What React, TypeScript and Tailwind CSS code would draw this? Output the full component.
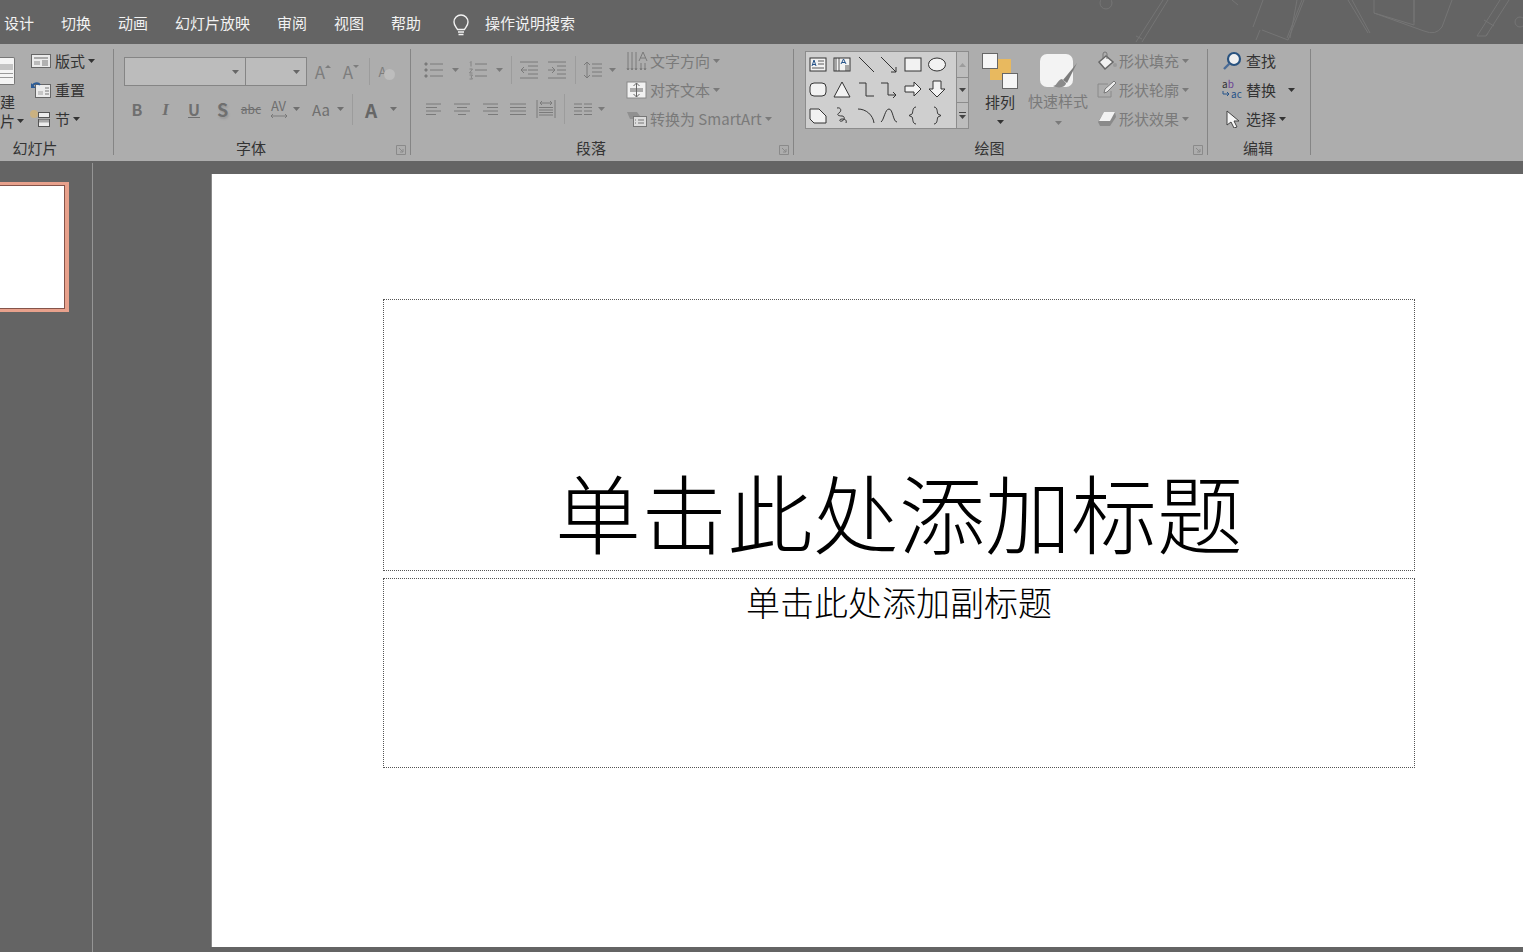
import type { ReactNode } from 'react';

const TABS = ['设计', '切换', '动画', '幻灯片放映', '审阅', '视图', '帮助'];

function Caret({ className = '' }: { className?: string }) {
  return (
    <svg width="7" height="4" viewBox="0 0 7 4" className={`shrink-0 ${className}`}>
      <path d="M0 0h7L3.5 4z" fill="currentColor" />
    </svg>
  );
}

function Icon({ size = 20, children }: { size?: number; children: ReactNode }) {
  return (
    <svg width={size} height={size} viewBox="0 0 20 20" fill="none" stroke="currentColor" className="shrink-0 overflow-visible">
      {children}
    </svg>
  );
}

function Cell({ className, children }: { className: string; children?: ReactNode }) {
  return <div className={`flex h-full shrink-0 items-center justify-center ${className}`}>{children}</div>;
}

function Launcher() {
  return (
    <svg width="10" height="10" viewBox="0 0 10 10" fill="none" stroke="#8a8a8a">
      <path d="M.5.5h9v9h-9zM3 3l4 4M7 4v3H4" />
    </svg>
  );
}

function Group({
  className,
  label,
  launcher = true,
  labelClass = '',
  children,
}: {
  className: string;
  label: string;
  launcher?: boolean;
  labelClass?: string;
  children: ReactNode;
}) {
  return (
    <>
      <div className={`flex h-full shrink-0 flex-col ${className}`}>
        <div className="flex h-[91px]">{children}</div>
        <div className={`flex h-[24px] items-center ${labelClass}`}>
          <span className="flex-1 text-center text-[15px] leading-none text-[#333]">{label}</span>
          {launcher && (
            <span className="flex w-[22px] justify-end pr-[4px] pt-[5px]">
              <Launcher />
            </span>
          )}
        </div>
      </div>
      <div className="mt-[5px] h-[106px] w-px shrink-0 bg-[#858585]" />
    </>
  );
}

function RowItem({
  icon,
  text,
  caret = true,
  textClass = 'text-[#333]',
  iconClass = 'w-[24px]',
}: {
  icon: ReactNode;
  text: string;
  caret?: boolean;
  textClass?: string;
  iconClass?: string;
}) {
  return (
    <div className={`flex h-[29px] items-center ${textClass}`}>
      <span className={`flex shrink-0 items-center justify-start ${iconClass}`}>{icon}</span>
      <span className="whitespace-nowrap text-[15px] leading-none">{text}</span>
      {caret && <Caret className="ml-[3px]" />}
    </div>
  );
}

function TopSketch() {
  return (
    <svg width="433" height="44" viewBox="0 0 433 44" fill="none" stroke="#757575" strokeWidth="1" className="ml-auto shrink-0">
      <circle cx="16" cy="3" r="6" />
      <path d="M46 42 73 0M52 42 78 0M46 36l6 3" />
      <path d="M142 0l6 5" />
      <path d="M163 27 173 0M170 30 166 40M172 30l26 10 16-40M197 38 212 0M200 38 207 0" />
      <path d="M262 0l18 33M258 0l20 33" />
      <path d="M284 0v13l40 12V0M284 13l50 18q12 5 18-4l10-27M324 0v22" />
      <path d="M389 33 410 0M396 36 419 0M389 33l-2 3 9 0 2-3M394 20l10 6" />
      <circle cx="430" cy="22" r="5" />
    </svg>
  );
}

function TopBar() {
  return (
    <div className="flex h-[44px] shrink-0 items-center bg-[#646464] pl-[4px] text-[15px] leading-none text-[#f2f2f2]">
      <div className="flex gap-[27px]">
        {TABS.map((t) => (
          <span key={t} className="whitespace-nowrap">
            {t}
          </span>
        ))}
      </div>
      <svg width="20" height="24" viewBox="0 0 20 24" fill="none" stroke="#f2f2f2" strokeWidth="1.4" className="ml-[30px] mt-[8px] shrink-0">
        <path d="M6.5 15.5C5 13 3 11.5 3 8a7 7 0 0 1 14 0c0 3.5-2 5-3.500 7.500z" />
        <path d="M7 18h6M7.500 20.500h5" strokeWidth="1.600" />
      </svg>
      <span className="ml-[14px] whitespace-nowrap">操作说明搜索</span>
      <TopSketch />
    </div>
  );
}

function SlidesGroup() {
  return (
    <Group className="w-[113px]" label="幻灯片" launcher={false} labelClass="pr-[43px]">
      <div className="flex w-[31px] shrink-0 flex-col text-[15px] leading-none text-[#333]">
        <div className="mt-[13px] flex h-[28px] w-[15px] flex-col justify-center gap-[3px] rounded-r-[2px] border border-l-0 border-[#777] bg-[#f4f4f4] pr-[1px]">
          <div className="h-[6px] bg-[#c4c4c4]" />
          <div className="h-px bg-[#999]" />
          <div className="h-px bg-[#999]" />
        </div>
        <span className="mt-[9px] h-[19px] whitespace-nowrap">建</span>
        <span className="flex items-center whitespace-nowrap">
          <span className="w-[16px]">片</span>
          <Caret className="ml-[1px]" />
        </span>
      </div>
      <div className="pt-[2px]">
        <RowItem
          text="版式"
          icon={
            <Icon>
              <rect x=".5" y="3.500" width="19" height="13" fill="#ececec" stroke="#666" />
              <path d="M3 6h14v2H3z" fill="#aaa" stroke="none" />
              <path d="M3 10h6v4H3z" fill="#bbb" stroke="none" />
              <path d="M11 10h6M11 12h6M11 14h6" stroke="#777" />
            </Icon>
          }
        />
        <RowItem
          text="重置"
          caret={false}
          icon={
            <Icon>
              <rect x="4.500" y="4.500" width="15" height="13" fill="#ececec" stroke="#666" />
              <path d="M7 11h5v4H7z" fill="#c6c6c6" stroke="none" />
              <path d="M14 8h4M14 11h4M14 14h4" stroke="#777" />
              <path d="M1 7c1-4 6-5 8-2" stroke="#2c5c96" strokeWidth="2" />
              <path d="M0 3v5h5z" fill="#2c5c96" stroke="none" />
            </Icon>
          }
        />
        <RowItem
          text="节"
          icon={
            <Icon>
              <circle cx="3" cy="5" r="4" fill="#d6b26e" stroke="none" opacity=".7" />
              <rect x="7.500" y="3.500" width="11" height="5" fill="#ececec" stroke="#555" />
              <rect x="7.500" y="10.500" width="11" height="7" fill="#ececec" stroke="#555" />
              <path d="M8 10.500h10v3H8z" fill="#a8a8a8" stroke="none" />
            </Icon>
          }
        />
      </div>
    </Group>
  );
}

function FontSelect({ className }: { className: string }) {
  return (
    <div className={`flex h-[29px] items-center justify-end border border-[#858585] bg-[#bcbcbc] pr-[6px] text-[#666] ${className}`}>
      <Caret />
    </div>
  );
}

function GrowA({ up }: { up: boolean }) {
  return (
    <div className="flex items-start text-[#7d7d7d]">
      <span className="text-[17px] leading-[20px]">A</span>
      <svg width="6" height="3" viewBox="0 0 6 3" className="mt-[3px] shrink-0">
        <path d={up ? 'M0 3l3-3 3 3z' : 'M0 0l3 3 3-3z'} fill="currentColor" />
      </svg>
    </div>
  );
}

function FontGroup() {
  return (
    <Group className="w-[296px]" label="字体">
      <div className="flex flex-col pl-[10px] pt-[13px] text-[#6f6f6f]">
        <div className="flex h-[29px] items-center">
          <FontSelect className="w-[122px]" />
          <FontSelect className="w-[61px] border-l-0" />
          <Cell className="w-[32px]">
            <GrowA up />
          </Cell>
          <Cell className="w-[24px]">
            <GrowA up={false} />
          </Cell>
          <div className="ml-[6px] h-[27px] w-px bg-[#9c9c9c]" />
          <Cell className="w-[34px]">
            <div className="flex items-center">
              <span className="text-[13px] leading-none text-[#7d7d7d]">A</span>
              <span className="ml-[-2px] mt-[6px] h-[11px] w-[11px] rounded-full bg-[#bdbdbd]" />
            </div>
          </Cell>
        </div>
        <div className="mt-[9px] flex h-[28px] items-center leading-none">
          <Cell className="ml-[-1px] w-[28px] text-[16px] font-bold">B</Cell>
          <Cell className="w-[29px] font-['Liberation_Serif',serif] text-[17px] font-bold italic">I</Cell>
          <Cell className="w-[28px] text-[16px] font-bold underline">U</Cell>
          <Cell className="w-[29px] text-[18px] font-bold [text-shadow:1px_2px_2px_#999]">S</Cell>
          <Cell className="w-[28px] text-[12px] line-through">abc</Cell>
          <Cell className="w-[27px]">
            <div className="flex flex-col items-center">
              <span className="text-[13px] leading-[12px]">AV</span>
              <svg width="18" height="6" viewBox="0 0 18 6" fill="none" stroke="currentColor" strokeWidth=".8" className="mt-[1px] shrink-0">
                <path d="M1 3h16M3 1 1 3l2 2M15 1l2 2-2 2" />
              </svg>
            </div>
          </Cell>
          <Cell className="w-[8px]">
            <Caret />
          </Cell>
          <Cell className="ml-[6px] w-[30px] text-[15px]">Aa</Cell>
          <Cell className="w-[8px]">
            <Caret />
          </Cell>
          <div className="ml-[8px] h-[31px] w-px bg-[#9c9c9c]" />
          <Cell className="ml-[4px] w-[28px] text-[19px] font-semibold text-[#666]">A</Cell>
          <Cell className="ml-[2px] w-[12px]">
            <Caret />
          </Cell>
        </div>
      </div>
    </Group>
  );
}

function Lines({ d, extra }: { d: string; extra?: ReactNode }) {
  return (
    <Icon>
      <path d={d} />
      {extra}
    </Icon>
  );
}

function ParagraphGroup() {
  return (
    <Group className="w-[382px]" label="段落">
      <div className="flex w-[216px] shrink-0 flex-col pl-[13px] pt-[12px] text-[#7a7a7a]">
        <div className="flex h-[28px] items-center">
          <Cell className="w-[20px]">
            <Lines
              d="M6 4h13M6 10h13M6 16h13"
              extra={<path d="M1 3h2v2H1zM1 9h2v2H1zM1 15h2v2H1z" fill="currentColor" />}
            />
          </Cell>
          <Cell className="ml-[7px] w-[8px]">
            <Caret />
          </Cell>
          <Cell className="ml-[9px] w-[20px]">
            <Lines
              d="M7 4h12M7 10h12M7 16h12"
              extra={<path d="M3 1.500v5M2 2.500l1-1M1.500 9h3l-3 4h3M1.500 15h3l-1.500 2 1.500 2h-3" strokeWidth=".8" />}
            />
          </Cell>
          <Cell className="ml-[7px] w-[8px]">
            <Caret />
          </Cell>
          <div className="ml-[8px] h-[28px] w-px bg-[#9c9c9c]" />
          <Cell className="ml-[7px] w-[20px]">
            <Lines d="M1 2h18M9 6h10M9 10h10M9 14h10M1 18h18M8 10H2M5 7l-3 3 3 3" />
          </Cell>
          <Cell className="ml-[8px] w-[20px]">
            <Lines d="M1 2h18M10 6h9M10 10h9M10 14h9M1 18h18M1 10h6M5 7l3 3-3 3" />
          </Cell>
          <div className="ml-[8px] h-[28px] w-px bg-[#9c9c9c]" />
          <Cell className="ml-[7px] w-[20px]">
            <Lines d="M9 4h10M9 8h10M9 12h10M9 16h10M4 2v16M1 5l3-3 3 3M1 15l3 3 3-3" />
          </Cell>
          <Cell className="ml-[5px] w-[8px]">
            <Caret />
          </Cell>
        </div>
        <div className="mt-[11px] flex h-[28px] items-center">
          <Cell className="w-[20px]">
            <Lines d="M2 5h15M2 8.500h11M2 12h15M2 15.500h10" />
          </Cell>
          <Cell className="ml-[8px] w-[20px]">
            <Lines d="M2 5h16M5 8.500h10M2 12h16M6 15.500h8" />
          </Cell>
          <Cell className="ml-[8px] w-[20px]">
            <Lines d="M3 5h15M7 8.500h11M3 12h15M8 15.500h10" />
          </Cell>
          <Cell className="ml-[8px] w-[20px]">
            <Lines d="M2 5h16M2 8.500h16M2 12h16M2 15.500h16" />
          </Cell>
          <Cell className="ml-[8px] w-[20px]">
            <Lines d="M1 1v18M19 1v18M4 4h12M6 2 4 4l2 2M14 2l2 2-2 2M3 8.500h14M3 11h14M3 13.500h14M3 16h14" />
          </Cell>
          <div className="ml-[8px] h-[30px] w-px bg-[#9c9c9c]" />
          <Cell className="ml-[8px] w-[20px]">
            <Lines d="M1 5h8M11 5h8M1 8.500h8M11 8.500h8M1 12h8M11 12h8M1 15.500h8M11 15.500h8" />
          </Cell>
          <Cell className="ml-[4px] w-[8px]">
            <Caret />
          </Cell>
        </div>
      </div>
      <div className="pt-[2px]">
        <RowItem
          text="文字方向"
          textClass="text-[#7a7a7a]"
          iconClass="w-[23px]"
          icon={
            <Icon>
              <path d="M1 1v18M5 1v18M9 1v18M14 12v7M18 12v7M0 17l1 2 1-2M4 17l1 2 1-2M8 17l1 2 1-2M13 17l1 2 1-2M17 17l1 2 1-2" />
              <path d="M12 10l4-9 4 9M13.500 7h5" />
            </Icon>
          }
        />
        <RowItem
          text="对齐文本"
          textClass="text-[#7a7a7a]"
          iconClass="w-[23px]"
          icon={
            <Icon>
              <rect x="0" y="2" width="19" height="16" fill="#f2f2f2" stroke="#8a8a8a" />
              <path d="M9.500 3v14M6.500 6l3-3 3 3M6.500 14l3 3 3-3M3 9h13M3 11h13" stroke="#666" />
            </Icon>
          }
        />
        <RowItem
          text="转换为 SmartArt"
          textClass="text-[#7a7a7a]"
          iconClass="w-[23px]"
          icon={
            <Icon>
              <path d="M0 3h10l3 4-3 3H3z" fill="#909090" stroke="none" />
              <rect x="6.500" y="7.500" width="13" height="10" fill="#dcdcdc" stroke="#777" />
              <path d="M11 11h6M11 14h6M8 11h1M8 14h1" stroke="#777" />
            </Icon>
          }
        />
      </div>
    </Group>
  );
}

const SHAPES: ReactNode[] = [
  <>
    <rect x="1" y="3" width="16" height="13" fill="#f2f2f2" />
    <path d="M3 11l2-6 2 6M3.700 9.500h2.600" stroke="#27548a" />
    <path d="M9 6h6M9 9h6M3 13h12" strokeWidth=".8" />
  </>,
  <>
    <rect x="1" y="3" width="16" height="13" fill="#f2f2f2" />
    <path d="M3 3v13M6 3v13M13 10v6M15 10v6" strokeWidth=".8" />
    <path d="M8 9l2.500-5L13 9M9 7.500h3" stroke="#27548a" />
  </>,
  <path d="M2 2l15 15" />,
  <path d="M1 2l15 15M16 12v5h-5" />,
  <rect x="1" y="3" width="16" height="13" fill="#f2f2f2" />,
  <ellipse cx="9" cy="9.500" rx="8.500" ry="6.500" fill="#f2f2f2" />,
  <rect x="1" y="3" width="16" height="13" rx="4" fill="#f2f2f2" />,
  <path d="M9 2 1 17h16z" fill="#f2f2f2" />,
  <path d="M2 3h7v13h8" />,
  <path d="M1 3h7v12h8M13 12l3 3-3 3" />,
  <path d="M1 6h9V2l7 7-7 7v-4H1z" fill="#f2f2f2" />,
  <path d="M5 1h8v8h4l-8 8-8-8h4z" fill="#f2f2f2" />,
  <path d="M1 3h9l7 7v7H5l-4-4z" fill="#f2f2f2" strokeLinejoin="round" />,
  <path d="M4 2c4-1 5 3 2 5s0 3 3 3 3 4 0 5-3-2 0-2 5 1 4 4" />,
  <path d="M1 3c8 0 15 6 16 14" />,
  <path d="M1 16C4 14 5 3 9 3s4 13 8 13" />,
  <path d="M12 1C8 1 9 8 8 8L5 9.500 8 11c1 0 0 7 4 7" />,
  <path d="M6 1c4 0 3 7 4 7l3 1.500L10 11c-1 0 0 7-4 7" />,
];

function ShapeGallery() {
  return (
    <div className="mt-[7px] flex h-[78px] w-[164px] shrink-0 border border-[#8c8c8c]">
      <div className="grid w-[150px] shrink-0 grid-cols-6 bg-[#cfcfcf] pr-[7px] text-[#333]">
        {SHAPES.map((shape, i) => (
          <div key={i} className="flex items-center justify-center">
            <svg width="18" height="19" viewBox="0 0 18 19" fill="none" stroke="currentColor" className="shrink-0">
              {shape}
            </svg>
          </div>
        ))}
      </div>
      <div className="flex flex-1 flex-col border-l border-[#8c8c8c] bg-[#bdbdbd] text-[#444]">
        <div className="flex h-[25px] items-center justify-center text-[#9c9c9c]">
          <svg width="7" height="4" viewBox="0 0 7 4">
            <path d="M0 4h7L3.500 0z" fill="currentColor" />
          </svg>
        </div>
        <div className="flex h-[26px] items-center justify-center border-y border-[#8c8c8c]">
          <Caret />
        </div>
        <div className="flex flex-1 flex-col items-center justify-center gap-[2px]">
          <div className="h-px w-[7px] bg-current" />
          <Caret />
        </div>
      </div>
    </div>
  );
}

function DrawingGroup() {
  return (
    <Group className="w-[413px]" label="绘图">
      <div className="ml-[11px]">
        <ShapeGallery />
      </div>
      <div className="ml-[13px] flex w-[36px] shrink-0 flex-col items-center pt-[9px] text-[15px] leading-none text-[#333]">
        <svg width="36" height="36" viewBox="0 0 36 36" className="shrink-0">
          <path d="M8 6h21v21H8z" fill="#e8b95f" />
          <rect x=".5" y=".5" width="15" height="15" fill="#f6f6f6" stroke="#666" />
          <rect x="20.500" y="20.500" width="15" height="15" fill="#f6f6f6" stroke="#666" />
        </svg>
        <span className="mt-[5px] whitespace-nowrap">排列</span>
        <Caret className="mt-[11px]" />
      </div>
      <div className="ml-[10px] flex w-[60px] shrink-0 flex-col items-center pt-[10px] text-[15px] leading-none text-[#7a7a7a]">
        <svg width="40" height="36" viewBox="0 0 40 36" className="shrink-0">
          <rect x="2" y="0" width="33" height="33" rx="7" fill="#f3f3f3" />
          <path d="M39 9 25 26l4 3z" fill="#7c7c7c" />
          <path d="M24 25c-5 1-4 6-9 7 6 3 13 1 13-3z" fill="#8a8a8a" />
        </svg>
        <span className="mt-[3px] whitespace-nowrap">快速样式</span>
        <Caret className="mt-[13px]" />
      </div>
      <div className="ml-[9px] pt-[2px]">
        <RowItem
          text="形状填充"
          textClass="text-[#7a7a7a]"
          iconClass="w-[22px]"
          icon={
            <Icon>
              <path d="M9 5 2 11l6 7 8-7z" fill="#f2f2f2" stroke="#666" strokeWidth="1.500" />
              <path d="M6 7V3a2 2 0 0 1 4 0v5" stroke="#777" />
              <circle cx="18" cy="14" r="2" fill="#999" stroke="none" />
            </Icon>
          }
        />
        <RowItem
          text="形状轮廓"
          textClass="text-[#7a7a7a]"
          iconClass="w-[22px]"
          icon={
            <Icon>
              <path d="M1 4v13h13V11M1 4h10" stroke="#8a8a8a" />
              <path d="M7 13l1-4L17 1l2 2-9 9z" fill="#eaeaea" stroke="#777" />
            </Icon>
          }
        />
        <RowItem
          text="形状效果"
          textClass="text-[#7a7a7a]"
          iconClass="w-[22px]"
          icon={
            <Icon>
              <path d="M7 3h11l1 5-6 9H3L1 13z" fill="#8a8a8a" stroke="none" />
              <path d="M7 3h11l-5 9H2z" fill="#f2f2f2" stroke="none" />
            </Icon>
          }
        />
      </div>
    </Group>
  );
}

function EditingGroup() {
  return (
    <Group className="w-[102px]" label="编辑" launcher={false} labelClass="pr-[2px]">
      <div className="pl-[14px] pt-[2px]">
        <RowItem
          text="查找"
          caret={false}
          icon={
            <Icon>
              <circle cx="12" cy="8" r="6" fill="#f0f0f0" stroke="#28527f" strokeWidth="2.200" />
              <path d="M7.500 12.500 2 18" stroke="#4a6c96" strokeWidth="2.400" />
            </Icon>
          }
        />
        <div className="flex h-[29px] items-center text-[#333]">
          <span className="flex w-[24px] shrink-0 justify-start">
            <svg width="21" height="21" viewBox="0 0 21 21" className="shrink-0 overflow-visible">
              <text x="0" y="9" fontSize="10" fill="#333">
                a<tspan fill="#6b3f94">b</tspan>
              </text>
              <text x="9" y="19" fontSize="10" fill="#27548a">
                ac
              </text>
              <path d="M1 12v3h6M5 13l2 2-2 2" fill="none" stroke="#27548a" />
            </svg>
          </span>
          <span className="whitespace-nowrap text-[15px] leading-none">替换</span>
          <Caret className="ml-[12px]" />
        </div>
        <RowItem
          text="选择"
          icon={
            <svg width="14" height="18" viewBox="0 0 14 18" className="ml-[4px] shrink-0">
              <path d="M1 1v14l4-3 3 6 3-1-3-6h5z" fill="#f6f6f6" stroke="#444" />
            </svg>
          }
        />
      </div>
    </Group>
  );
}

function Ribbon() {
  return (
    <div className="flex h-[117px] shrink-0 bg-[#adadad] text-[#7a7a7a]">
      <SlidesGroup />
      <FontGroup />
      <ParagraphGroup />
      <DrawingGroup />
      <EditingGroup />
    </div>
  );
}

function Slide() {
  return (
    <div className="mb-[5px] mt-[13px] flex-1 border-l border-[#8a8a8a] bg-white pl-[171px] pt-[125px]">
      <div className="flex h-[272px] w-[1032px] items-end justify-center border border-dotted border-[#555] pb-[8px]">
        <span className="whitespace-nowrap text-[86px] font-light leading-[1.2] text-black">单击此处添加标题</span>
      </div>
      <div className="mt-[7px] flex h-[190px] w-[1032px] justify-center border border-dotted border-[#555]">
        <span className="whitespace-nowrap text-[34px] font-light leading-[46px] text-black">单击此处添加副标题</span>
      </div>
    </div>
  );
}

export default function App() {
  return (
    <div className="flex h-[952px] w-[1523px] flex-col overflow-hidden bg-[#646464] font-['Noto_Sans_CJK_SC','Liberation_Sans',sans-serif]">
      <TopBar />
      <Ribbon />
      <div className="flex min-h-0 flex-1">
        <div className="flex w-[92px] shrink-0 justify-start pt-[21px]">
          <div className="h-[130px] w-[69px] border-y-[3px] border-r-[4px] border-[#e8a18c]">
            <div className="h-full border-y border-r border-[#85544a] bg-white" />
          </div>
        </div>
        <div className="mt-[2px] w-px shrink-0 bg-[#959595]" />
        <div className="w-[118px] shrink-0" />
        <Slide />
      </div>
    </div>
  );
}
